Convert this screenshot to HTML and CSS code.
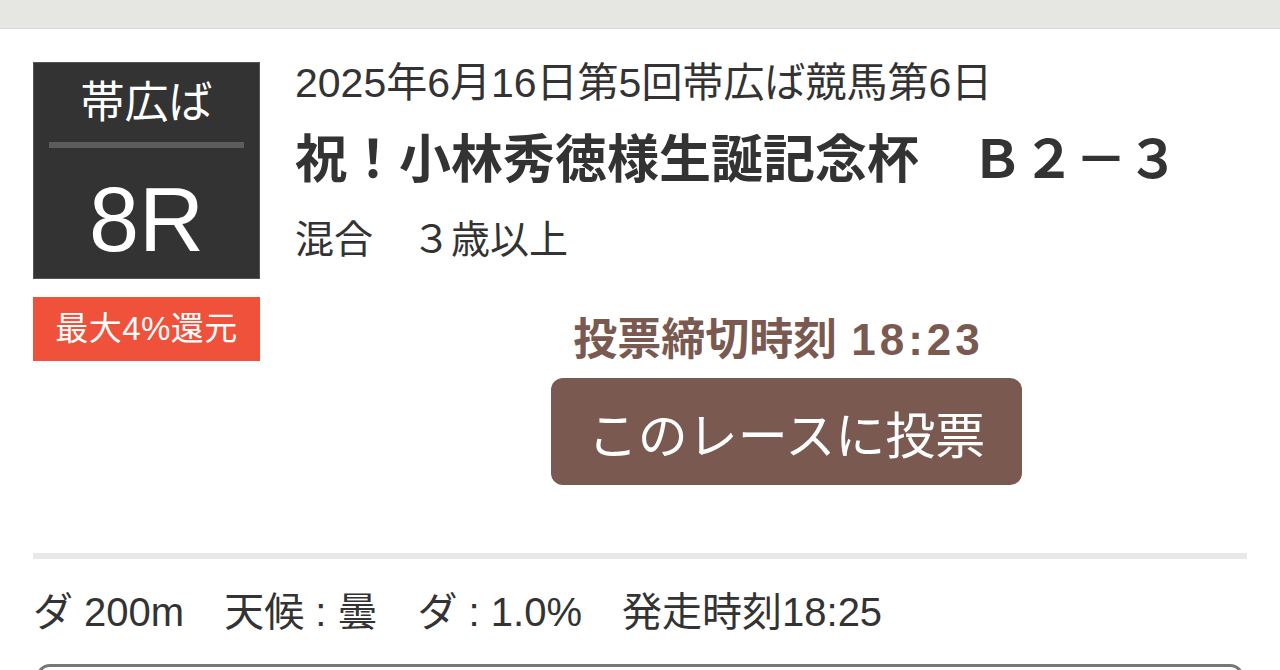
FILE: index.html
```html
<!DOCTYPE html>
<html lang="ja">
<head>
<meta charset="utf-8">
<title>帯広ば 8R</title>
<link rel="stylesheet" href="styles.css">
</head>
<body>
<div class="topbar"></div>
<main class="race">
  <section class="head">
    <div class="left">
      <div class="racebox">
        <div class="venue">帯広ば</div>
        <div class="rule"></div>
        <div class="rnum">8R</div>
      </div>
      <div class="badge">最大4%還元</div>
    </div>
    <div class="info">
      <div class="date">2025年6月16日第5回帯広ば競馬第6日</div>
      <h1 class="title">祝！小林秀徳様生誕記念杯　Ｂ２－３</h1>
      <div class="cond">混合　３歳以上</div>
      <div class="vote">
        <div class="deadline">投票締切時刻<span class="time">18:23</span></div>
        <a class="btn">このレースに投票</a>
      </div>
    </div>
  </section>
  <hr class="sep">
  <div class="meta">ダ 200m　天候 : 曇　ダ : 1.0%　発走時刻18:25</div>
  <div class="panel"></div>
</main>
</body>
</html>
```
FILE: styles.css
```css
html, body {
  margin: 0;
  background: #fff;
  overflow: hidden;
}
body {
  font-family: "Liberation Sans", "Noto Sans CJK JP", sans-serif;
  color: #333;
}
.topbar {
  height: 28px;
  background: #e6e6e2;
  border-bottom: 1px solid #dadad6;
}
.race {
  padding: 33px 33px 0;
}
.head {
  display: flex;
  gap: 35px;
}
.left {
  width: 227px;
  flex: none;
}
.racebox {
  background: #333;
  border: 1px solid #555;
  height: 217px;
  box-sizing: border-box;
  display: flex;
  flex-direction: column;
  align-items: center;
  color: #fff;
}
.venue {
  margin-top: 18px;
  font-size: 44px;
  line-height: 44px;
}
.rule {
  align-self: stretch;
  margin: 17px 15px 0;
  height: 6px;
  background: #5c5c5c;
}
.rnum {
  margin-top: 27px;
  font-size: 90px;
  line-height: 90px;
}
.badge {
  margin-top: 18px;
  height: 64px;
  background: #ef513b;
  color: #fff;
  font-size: 33px;
  line-height: 64px;
  text-align: center;
  letter-spacing: 0.5px;
}
.info {
  flex: 1;
  min-width: 0;
}
.date {
  font-size: 41px;
  line-height: 42px;
}
.title {
  margin: 26px 0 0;
  font-size: 52px;
  line-height: 60px;
  font-weight: 700;
  white-space: nowrap;
}
.cond {
  margin-top: 28px;
  font-size: 39px;
  line-height: 44px;
}
.vote {
  margin-top: 53px;
  padding-left: 31px;
  display: flex;
  flex-direction: column;
  align-items: center;
}
.deadline {
  padding-right: 16px;
  font-size: 44px;
  line-height: 50px;
  font-weight: 700;
  color: #7a5a50;
}
.time {
  margin-left: 14px;
  letter-spacing: 4px;
}
.btn {
  margin-top: 13px;
  width: 471px;
  height: 107px;
  border-radius: 12px;
  background: #7a5a50;
  color: #fff;
  font-size: 50px;
  display: flex;
  align-items: center;
  justify-content: center;
}
.sep {
  border: none;
  height: 6px;
  background: #e8e8e8;
  margin: 68px 0 0;
}
.meta {
  margin-top: 31px;
  font-size: 40px;
  line-height: 44px;
}
.panel {
  margin: 30px 3px 0;
  height: 120px;
  border: 3px solid #777;
  border-radius: 14px;
}
```
